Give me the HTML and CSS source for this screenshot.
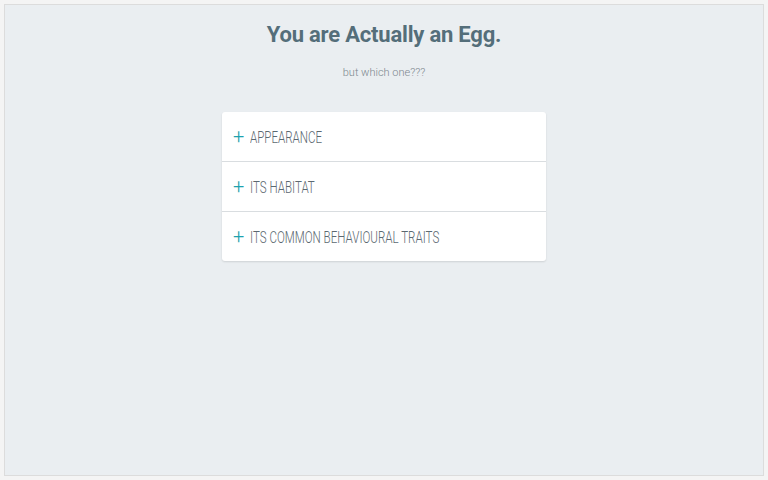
FILE: index.html
```html
<!DOCTYPE html>
<html>
<head>
<meta charset="utf-8">
<link rel="stylesheet" href="styles.css">
</head>
<body>
<div class="frame">
  <h1 class="title">You are Actually an Egg.</h1>
  <p class="subtitle">but which one???</p>
  <div class="accordion">
    <div class="item"><span class="plus">+</span><span class="label">APPEARANCE</span></div>
    <div class="item"><span class="plus">+</span><span class="label">ITS HABITAT</span></div>
    <div class="item"><span class="plus">+</span><span class="label">ITS COMMON BEHAVIOURAL TRAITS</span></div>
  </div>
</div>
</body>
</html>
```
FILE: styles.css
```css
html, body {
  margin: 0;
  padding: 0;
}
body {
  background: #f4f4f4;
  padding: 4px;
  width: 768px;
  height: 480px;
  box-sizing: border-box;
}
.frame {
  background: #eaeef1;
  border: 1px solid #dcdcdc;
  height: 472px;
  box-sizing: border-box;
  display: flex;
  flex-direction: column;
  align-items: center;
}
.title {
  margin: 16px 0 0;
  font-family: Roboto, sans-serif;
  font-weight: 700;
  font-size: 22px;
  line-height: 28px;
  color: #546e7a;
  letter-spacing: -0.2px;
}
.subtitle {
  margin: 17px 0 0;
  font-family: Roboto, sans-serif;
  font-weight: 300;
  font-size: 11px;
  line-height: 14px;
  color: #7c878e;
}
.accordion {
  margin-top: 32px;
  width: 324px;
  background: #fff;
  border-radius: 3px;
  box-shadow: 0 1px 2px rgba(0,0,0,0.12);
}
.item {
  height: 49px;
  display: flex;
  align-items: center;
  padding-left: 11px;
}
.item + .item {
  border-top: 1px solid #d9dde0;
}
.plus {
  font-family: Roboto, sans-serif;
  font-weight: 300;
  font-size: 20px;
  color: #1ea2ae;
  width: 17px;
  line-height: 20px;
  margin-top: -2px;
}
.label {
  font-family: Roboto, sans-serif;
  font-weight: 300;
  font-size: 17px;
  color: #5b6870;
  display: inline-block;
  transform: scaleX(0.68);
  transform-origin: left center;
}
```
